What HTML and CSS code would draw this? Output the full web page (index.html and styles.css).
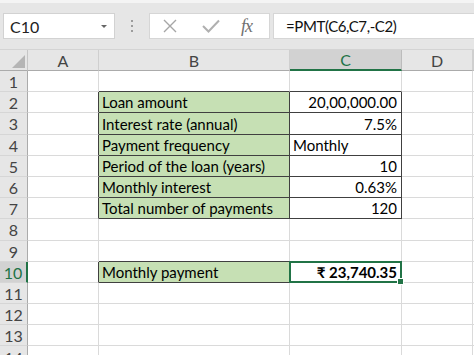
FILE: index.html
```html
<!DOCTYPE html>
<html lang="en">
<head>
  <meta charset="UTF-8" />
  <title>Loan payment - Sheet</title>
  <link rel="stylesheet" href="styles.css">
</head>
<body>

<div class="toolbar">
  <div class="namebox">
    <span>C10</span>
    <span class="caret"></span>
  </div>
  <div class="grip"><i></i><i></i><i></i></div>
  <div class="buttons">
    <svg class="btn-x" width="14" height="14" viewBox="0 0 14 14">
      <path d="M1 1 L13 13 M13 1 L1 13" stroke="#a6a6a6" stroke-width="1.4" fill="none"/>
    </svg>
    <svg class="btn-ok" width="18" height="14" viewBox="0 0 18 14">
      <path d="M1 7 L6.5 12.5 L17 1.5" stroke="#b0b0b0" stroke-width="2" fill="none"/>
    </svg>
    <span class="fx">fx</span>
  </div>
  <div class="formula">=PMT(C6,C7,-C2)</div>
</div>

<div class="sheet">
  <!-- column headers -->
  <div class="row head">
    <div class="corner"><span class="tri"></span></div>
    <div class="colhead">A</div>
    <div class="colhead">B</div>
    <div class="colhead active">C</div>
    <div class="colhead">D</div>
    <div class="colhead"></div>
  </div>

  <div class="row">
    <div class="rowhead">1</div>
    <div class="cell"></div>
    <div class="cell edge-b"></div>
    <div class="cell edge-b"></div>
    <div class="cell"></div>
    <div class="cell"></div>
  </div>

  <div class="row">
    <div class="rowhead">2</div>
    <div class="cell edge-r"></div>
    <div class="cell label">Loan amount</div>
    <div class="cell boxed num">20,00,000.00</div>
    <div class="cell"></div>
    <div class="cell"></div>
  </div>

  <div class="row">
    <div class="rowhead">3</div>
    <div class="cell edge-r"></div>
    <div class="cell label">Interest rate (annual)</div>
    <div class="cell boxed num">7.5%</div>
    <div class="cell"></div>
    <div class="cell"></div>
  </div>

  <div class="row">
    <div class="rowhead">4</div>
    <div class="cell edge-r"></div>
    <div class="cell label">Payment frequency</div>
    <div class="cell boxed">Monthly</div>
    <div class="cell"></div>
    <div class="cell"></div>
  </div>

  <div class="row">
    <div class="rowhead">5</div>
    <div class="cell edge-r"></div>
    <div class="cell label">Period of the loan (years)</div>
    <div class="cell boxed num">10</div>
    <div class="cell"></div>
    <div class="cell"></div>
  </div>

  <div class="row">
    <div class="rowhead">6</div>
    <div class="cell edge-r"></div>
    <div class="cell label">Monthly interest</div>
    <div class="cell boxed num">0.63%</div>
    <div class="cell"></div>
    <div class="cell"></div>
  </div>

  <div class="row">
    <div class="rowhead">7</div>
    <div class="cell edge-r"></div>
    <div class="cell label">Total number of payments</div>
    <div class="cell boxed num">120</div>
    <div class="cell"></div>
    <div class="cell"></div>
  </div>

  <div class="row">
    <div class="rowhead">8</div>
    <div class="cell"></div>
    <div class="cell"></div>
    <div class="cell"></div>
    <div class="cell"></div>
    <div class="cell"></div>
  </div>

  <div class="row">
    <div class="rowhead">9</div>
    <div class="cell"></div>
    <div class="cell edge-b"></div>
    <div class="cell edge-b"></div>
    <div class="cell"></div>
    <div class="cell"></div>
  </div>

  <div class="row">
    <div class="rowhead active">10</div>
    <div class="cell edge-r"></div>
    <div class="cell label">Monthly payment</div>
    <div class="cell boxed num total selected">₹ 23,740.35</div>
    <div class="cell"></div>
    <div class="cell"></div>
  </div>

  <div class="row">
    <div class="rowhead">11</div>
    <div class="cell"></div>
    <div class="cell"></div>
    <div class="cell"></div>
    <div class="cell"></div>
    <div class="cell"></div>
  </div>

  <div class="row">
    <div class="rowhead">12</div>
    <div class="cell"></div>
    <div class="cell"></div>
    <div class="cell"></div>
    <div class="cell"></div>
    <div class="cell"></div>
  </div>

  <div class="row">
    <div class="rowhead">13</div>
    <div class="cell"></div>
    <div class="cell"></div>
    <div class="cell"></div>
    <div class="cell"></div>
    <div class="cell"></div>
  </div>

  <div class="row">
    <div class="rowhead">14</div>
    <div class="cell"></div>
    <div class="cell"></div>
    <div class="cell"></div>
    <div class="cell"></div>
    <div class="cell"></div>
  </div>
</div>

</body>
</html>
```

FILE: styles.css
```css
* {
  box-sizing: border-box;
}

body {
  margin: 0;
  width: 474px;
  height: 355px;
  overflow: hidden;
  background-color: #ffffff;
  font-family: 'Lato', 'Liberation Sans', sans-serif;
  font-size: 15px;
  color: #000;
}

/* formula bar */
.toolbar {
  height: 50px;
  background-color: #e6e6e6;
  border-top: 3px solid #f4f4f4;
  border-bottom: 1px solid #d4d4d4;
  display: flex;
  align-items: flex-start;
  padding: 10px 0 0 3px;
}

.namebox {
  width: 112px;
  height: 26px;
  background-color: #fff;
  border: 1px solid #d2d2d2;
  display: flex;
  align-items: center;
  justify-content: space-between;
  padding: 0 7px 0 6px;
  color: #222;
  font-size: 16px;
}

.caret {
  width: 0;
  height: 0;
  border-left: 3px solid transparent;
  border-right: 3px solid transparent;
  border-top: 3px solid #666;
}

.grip {
  width: 34px;
  height: 26px;
  display: flex;
  flex-direction: column;
  align-items: center;
  justify-content: center;
  gap: 3px;
}

.grip i {
  display: block;
  width: 2px;
  height: 2px;
  background-color: #9c9c9c;
}

.buttons {
  width: 121px;
  height: 26px;
  background-color: #fff;
  border: 1px solid #d6d6d6;
  display: flex;
  align-items: center;
  padding-left: 13px;
}

.btn-x {
  margin-right: 25px;
}

.btn-ok {
  margin-right: 21px;
}

.fx {
  font-family: 'Liberation Serif', serif;
  font-style: italic;
  font-size: 18px;
  color: #707070;
  letter-spacing: -1px;
}

.formula {
  flex: 1;
  margin-left: 3px;
  height: 26px;
  background-color: #fff;
  border: 1px solid #d6d6d6;
  border-right: none;
  padding-left: 12px;
  line-height: 24px;
  font-size: 15px;
  letter-spacing: -0.4px;
  color: #111;
}

/* grid */
.row {
  display: grid;
  grid-template-columns: 28px 71px 191px 112px 71px 1fr;
  height: 21.2px;
}

.row.head {
  height: 21px;
}

.corner,
.colhead,
.rowhead {
  background-color: #e6e6e6;
  color: #444;
  display: flex;
  align-items: center;
  justify-content: center;
}

.corner {
  border-right: 1px solid #c6c6c6;
  border-bottom: 1px solid #ababab;
  position: relative;
}

.tri {
  position: absolute;
  right: 2px;
  bottom: 2px;
  width: 0;
  height: 0;
  border-left: 13px solid transparent;
  border-bottom: 13px solid #b5b5b5;
}

.colhead {
  border-right: 1px solid #cfcfcf;
  border-bottom: 1px solid #ababab;
  font-size: 16px;
}

.colhead.active {
  background-color: #d2d2d2;
  color: #217346;
  border-bottom: 2px solid #217346;
  border-right-color: #bcbcbc;
}

.rowhead {
  border-right: 1px solid #ababab;
  border-bottom: 1px solid #d6d6d6;
  font-size: 16px;
  padding-top: 1px;
}

.rowhead.active {
  background-color: #d2d2d2;
  color: #217346;
  border-right: 2px solid #217346;
}

.cell {
  border-right: 1px solid #dadada;
  border-bottom: 1px solid #dadada;
  display: flex;
  align-items: flex-end;
  padding: 0 4px 1px 3px;
  white-space: nowrap;
  line-height: 18px;
}

.edge-b {
  border-bottom-color: #404040;
}

.edge-r {
  border-right-color: #404040;
}

.label {
  background-color: #c6e0b4;
  border-right-color: #404040;
  border-bottom-color: #404040;
}

.boxed {
  border-right-color: #404040;
  border-bottom-color: #404040;
}

.num {
  justify-content: flex-end;
}

.total {
  font-weight: bold;
}

.selected {
  position: relative;
}

.selected::after {
  content: "";
  position: absolute;
  top: -1px;
  left: -1px;
  right: -1px;
  bottom: -1px;
  border: 2px solid #217346;
}

.selected::before {
  content: "";
  position: absolute;
  right: -3px;
  bottom: -3px;
  width: 5px;
  height: 5px;
  background-color: #217346;
  border: 1px solid #fff;
  z-index: 1;
}
```
